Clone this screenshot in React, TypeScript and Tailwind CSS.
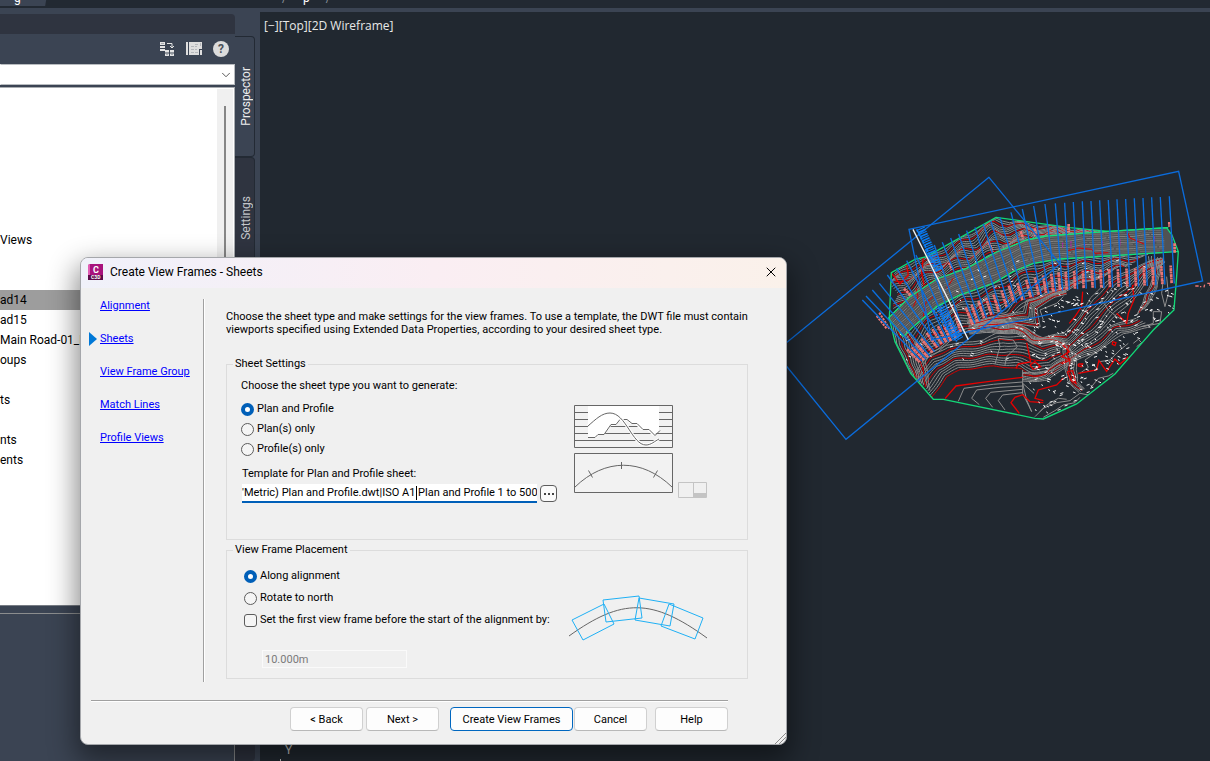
import React from 'react';
import { ChevronDown, X } from 'lucide-react';

type Point = [number, number];

const treeItems = ['Views', '', '', 'ad14', 'ad15', 'Main Road-01_M', 'oups', '', 'ts', '', 'nts', 'ents'];

const steps = ['Alignment', 'Sheets', 'View Frame Group', 'Match Lines', 'Profile Views'];

// Site plan geometry
const boundary: Point[] = [
  [648, 172], [870, 203], [985, 214], [1160, 203], [1176, 225], [1195, 275], [1190, 350], [1182, 450],
  [1120, 510], [1085, 550], [1005, 642], [890, 732], [790, 777], [765, 775], [490, 718], [460, 718],
  [392, 640], [345, 545], [328, 475], [334, 338], [405, 298], [440, 290], [510, 250],
];

const roadTop: Point[] = [
  [325, 475], [390, 410], [470, 357], [560, 325], [650, 276], [740, 240], [800, 228], [985, 214], [1165, 203],
];

const roadBottom: Point[] = [
  [370, 530], [400, 500], [470, 440], [540, 405], [640, 370], [700, 335], [760, 310], [840, 297], [1190, 275],
];

const ticks: [number, number, number, number][] = [
  [247, 420, 425, 603], [258, 408, 438, 597], [277, 390, 450, 588], [298, 370, 464, 575], [322, 345, 478, 560],
  [350, 325, 492, 550], [380, 302, 506, 545], [408, 285, 520, 542], [436, 268, 535, 536], [463, 255, 550, 515],
  [487, 247, 585, 492], [512, 234, 600, 484], [536, 222, 620, 474], [560, 212, 642, 464], [585, 202, 664, 455],
  [610, 192, 688, 442], [632, 182, 710, 428], [660, 172, 735, 420], [693, 157, 760, 412], [727, 147, 784, 405],
  [761, 138, 806, 400], [795, 132, 828, 395], [826, 130, 848, 392], [854, 128, 868, 390], [880, 126, 893, 388],
  [907, 124, 919, 386], [933, 123, 946, 385], [959, 121, 972, 384], [985, 120, 998, 383], [1011, 118, 1024, 382],
  [1037, 117, 1050, 381], [1063, 115, 1076, 380], [1089, 114, 1102, 378], [1115, 112, 1128, 376],
  [1141, 111, 1155, 374], [1168, 109, 1183, 371],
];

const families: { from: Point[]; to: Point[]; count: number; wave: number }[] = [
  {
    from: [[338, 344], [405, 302], [450, 290], [510, 256], [580, 220], [645, 178], [870, 206], [1000, 214]],
    to: [[345, 450], [390, 412], [470, 358], [520, 341], [580, 318], [650, 278], [800, 230], [1000, 215]],
    count: 19,
    wave: 11,
  },
  {
    from: [[380, 535], [405, 505], [470, 446], [540, 410], [640, 375], [760, 316], [900, 296], [1130, 286]],
    to: [[440, 600], [480, 570], [560, 510], [610, 490], [690, 470], [750, 425], [850, 395], [960, 350]],
    count: 15,
    wave: 9,
  },
  {
    from: [[400, 645], [440, 585], [500, 555], [610, 540], [650, 520], [740, 520], [780, 550], [845, 545]],
    to: [[455, 712], [500, 650], [540, 630], [640, 618], [725, 627], [760, 650], [820, 640], [855, 600]],
    count: 13,
    wave: 3,
  },
  {
    from: [[338, 490], [350, 550], [375, 600], [398, 645]],
    to: [[390, 515], [430, 585], [440, 620], [450, 700]],
    count: 10,
    wave: 2,
  },
  {
    from: [[560, 480], [700, 485], [750, 512], [790, 532], [850, 520], [900, 470], [930, 415], [980, 365], [1080, 315], [1150, 290]],
    to: [[570, 520], [700, 518], [760, 550], [830, 550], [880, 575], [940, 530], [1010, 465], [1060, 420], [1110, 350], [1160, 300]],
    count: 12,
    wave: 4,
  },
  {
    from: [[560, 488], [680, 462], [730, 455], [738, 422], [800, 402], [860, 378]],
    to: [[600, 500], [700, 492], [780, 500], [772, 445], [825, 412], [865, 400]],
    count: 9,
    wave: 2,
  },
  {
    from: [[728, 640], [800, 632], [855, 590], [920, 555], [990, 500], [1080, 470]],
    to: [[730, 664], [800, 662], [870, 612], [950, 575], [1030, 520], [1120, 500]],
    count: 7,
    wave: 4,
  },
  {
    from: [[848, 540], [852, 600], [862, 660], [900, 702]],
    to: [[885, 580], [890, 620], [892, 665], [915, 690]],
    count: 6,
    wave: 3,
  },
  {
    from: [[1105, 290], [1122, 350], [1095, 410], [1070, 470]],
    to: [[1150, 290], [1135, 360], [1125, 400], [1090, 455]],
    count: 6,
    wave: 3,
  },
];

const greyLines: Point[][] = [
  [[535, 724], [552, 685], [640, 673], [728, 666]],
  [[598, 734], [575, 715], [590, 690], [660, 682], [728, 678]],
  [[638, 742], [617, 715], [632, 697], [728, 688]],
  [[675, 750], [655, 722], [668, 705], [728, 698]],
  [[728, 630], [728, 700], [755, 755], [740, 720], [728, 670], [762, 700]],
  [[645, 612], [660, 560], [655, 535], [700, 540], [712, 560], [680, 590], [675, 615]],
  [[765, 770], [790, 745], [830, 728], [870, 722], [900, 700], [925, 705]],
  [[790, 772], [825, 752], [850, 735], [885, 728], [900, 712]],
  [[780, 755], [800, 735], [835, 715], [860, 718]],
  [[900, 640], [925, 622], [915, 600], [960, 570], [975, 560]],
  [[960, 605], [990, 600], [1020, 570], [1045, 550]],
  [[1090, 500], [1120, 490], [1120, 455], [1145, 455], [1140, 490], [1085, 500]],
  [[1150, 360], [1145, 400], [1155, 440], [1165, 400], [1160, 350]],
  [[935, 680], [955, 655], [985, 648], [1000, 640]],
  [[965, 420], [985, 450], [1010, 470], [1040, 485]],
  [[790, 480], [780, 450], [830, 430], [850, 410]],
  [[1060, 550], [1075, 538], [1085, 548], [1070, 560]],
];

const redLines: Point[][] = [
  [[495, 716], [528, 678], [600, 668], [728, 652]],
  [[718, 760], [693, 728], [705, 712], [728, 704], [750, 725], [790, 728]],
  [[1058, 375], [1062, 420], [1045, 460], [1040, 490], [1010, 460]],
  [[908, 395], [905, 440], [885, 470], [868, 490]],
  [[850, 655], [830, 675], [775, 690], [765, 715], [790, 722]],
  [[895, 640], [950, 630], [957, 602], [980, 634], [1005, 597], [1020, 612], [1045, 590]],
  [[740, 548], [748, 585], [752, 606], [715, 612], [708, 625]],
  [[750, 615], [765, 605], [782, 620], [760, 628], [750, 615]],
  [[862, 635], [878, 632], [888, 670], [872, 660], [862, 635]],
  [[848, 555], [868, 575], [845, 590], [870, 600], [845, 612]],
  [[998, 545], [1008, 548], [1005, 557], [997, 553], [998, 545]],
  [[895, 612], [908, 612], [905, 620], [895, 618], [895, 612]],
  [[335, 340], [360, 372], [385, 345], [380, 315]],
  [[430, 290], [425, 340], [432, 375]],
  [[1040, 215], [1050, 235], [1090, 250], [1120, 240]],
  [[865, 270], [890, 264], [935, 266], [945, 278], [975, 275]],
];

const toPath = (points: Point[]) => 'M' + points.map(([x, y]) => `${x.toFixed(1)} ${y.toFixed(1)}`).join('L');

// Adds vertices every few units so that a contour can be bent
const densify = (points: Point[], parts = 10): Point[] =>
  points.slice(1).flatMap(([x, y], i) =>
    Array.from({ length: parts }, (_, k): Point => {
      const [px, py] = points[i];
      return [px + ((x - px) * k) / parts, py + ((y - py) * k) / parts];
    }),
  );

const contours = (from: Point[], to: Point[], count: number, wave: number) => {
  const a = densify(from);
  const b = densify(to);
  return Array.from({ length: count }, (_, i) => {
    const t = i / (count - 1);
    return a.map(([x, y], k): Point => {
      const px = x + (b[k][0] - x) * t;
      const py = y + (b[k][1] - y) * t;
      const fade = wave * Math.sin(Math.PI * (0.15 + t * 0.7));
      return [px + fade * Math.cos(py / 11 + k / 5), py + fade * Math.sin(px / 15 + t)];
    });
  });
};

const randomMarks = (count: number, inside: (x: number, y: number) => boolean) => {
  const marks: [number, number, number][] = [];
  let seed = 7;
  const next = () => {
    seed = (seed * 16807) % 2147483647;
    return seed / 2147483647;
  };
  while (marks.length < count) {
    const x = 340 + next() * 850;
    const y = 180 + next() * 590;
    if (inside(x, y)) marks.push([x, y, Math.floor(next() * 3)]);
  }
  return marks;
};

const denseMarks = randomMarks(250, (x, y) => x > 745 && y > 385 && x + y < 1625 && x + y > 1180);
const looseMarks = randomMarks(110, (x, y) => x > 350 && x < 1180 && y > 300 && y < 600 && x + y > 830 && x + y < 1500);

function SitePlan() {
  return (
    <svg width="950" height="749" viewBox="0 0 950 749" fill="none" className="max-w-none [grid-area:1/1]">
      <defs>
        <clipPath id="site">
          <path d={toPath(boundary) + 'Z'} />
        </clipPath>
      </defs>
      <g transform="translate(520 148) scale(0.3333)" strokeWidth="3">
        <g clipPath="url(#site)">
          {families.map((f, i) =>
            contours(f.from, f.to, f.count, f.wave).map((line, k) => (
              <path key={`${i}-${k}`} d={toPath(line)} stroke={k % 5 === 2 ? '#d80000' : '#8e8e8e'} />
            )),
          )}
          {greyLines.map((line, i) => <path key={i} d={toPath(line)} stroke="#8e8e8e" />)}
          {redLines.map((line, i) => <path key={i} d={toPath(line)} stroke="#e60000" strokeWidth="4" />)}
          <path d={toPath([...roadTop, ...[...roadBottom].reverse()]) + 'Z'} fill="#58595a" fillOpacity="0.85" />
          {contours(roadTop, roadBottom, 13, 2).map((line, i) => (
            <path key={i} d={toPath(line)} stroke={i % 3 ? '#6c6c6c' : '#858585'} strokeDasharray={i % 2 ? '60 5' : undefined} />
          ))}
          <path d="M400 440l14-30-6-26M430 470l6-40 24-20M500 385l20-30M865 272l30-8 40 4 10 12 40-2M1040 212l10 22 42 18" stroke="#d80000" />
          {[...denseMarks, ...looseMarks].map(([x, y, kind], i) => (
            <path key={i} d={`M${x.toFixed(0)} ${y.toFixed(0)}${kind === 0 ? 'l9 -3' : kind === 1 ? 'l8 3' : 'l3 5'}`} stroke="#f8f8f8" />
          ))}
        </g>
        <path d={toPath(boundary) + 'Z'} stroke="#12d878" strokeWidth="4" />
        <path d={toPath(roadTop) + toPath([...roadBottom, [1195, 275]])} stroke="#12e07a" strokeWidth="4" />
        <path d="M325 475L370 530" stroke="#12e07a" strokeWidth="4" />

        {/* station labels */}
        {ticks.map(([x1, y1, x2, y2], i) => {
          const length = Math.hypot(x2 - x1, y2 - y1);
          const dx = (x2 - x1) / length;
          const dy = (y2 - y1) / length;
          const x = x2 - 8 * dy;
          const y = y2 + 8 * dx - 2;
          return (
            <path
              key={i}
              d={toPath([[x, y], [x - 54 * dx, y - 54 * dy]])}
              stroke="#e87474"
              strokeWidth="8"
              strokeDasharray={i % 2 ? '9 2 6 1' : '6 1 11 2'}
            />
          );
        })}
        <path d="M298 458L328 506M290 468l30 38" stroke="#ee7777" strokeWidth="6" strokeDasharray="7 3" />
        <path d="M508 308l8 22M722 214l8 22M765 205v24M866 192v24M626 246l12 30M372 386l20 20M864 308v12M1168 186v14M1184 250v28" stroke="#ee7777" strokeWidth="8" strokeDasharray="8 2" />
        <path d="M1246 378h10M1260 380h4M1274 374l-2 8M1282 370h8v8" stroke="#ee7777" strokeWidth="4" />
        <path d="M848 248v14M873 244v20M915 252v6M967 244v14M1020 238v20M1071 236v20M1123 230v20M1176 228v16" stroke="#c416c4" strokeDasharray="6 3" />

        {ticks.map(([x1, y1, x2, y2], i) => <path key={i} d={`M${x1} ${y1}L${x2} ${y2}`} stroke="#0a6fe0" strokeWidth="4" />)}

        {/* view frames and match line */}
        <path d="M387 208L1196 34L1268 363L455 540Z" stroke="#0b6cdc" strokeWidth="4" />
        <path d="M627 52L-15 576L198 838L840 312Z" stroke="#0b6cdc" strokeWidth="4" />
        <path d="M422 205L478 330M478 440L540 540" stroke="#0a7cf5" strokeWidth="26" strokeDasharray="3 3 5 3" />
        <path d="M410 208l62 122M460 450l70 96" stroke="#0a7cf5" strokeWidth="5" strokeDasharray="9 4" />
        <path d="M399 208L565 539" stroke="#f2f2f2" strokeWidth="4" />
      </g>
      <text x="25" y="742" fontSize="12" fontFamily="Roboto, sans-serif" fill="#c8c8c8">Y</text>
      <path d="M20.500 747v3" stroke="#c8c8c8" />
    </svg>
  );
}

function Toolspace() {
  return (
    <>
      <aside className="flex w-[235px] shrink-0 flex-col pt-0.5">
        <div className="h-5 rounded-tr bg-[#2f3440]" />
        <div className="flex h-[30px] items-center justify-end gap-2.5 pr-1.5">
          <button aria-label="Item view" className="flex size-4 items-center justify-center">
            <svg width="16" height="16" viewBox="0 0 16 16" fill="#e4e4e4">
              <path d="M1 1h5v3H1zM1 5h5v2H1zM1 8h5v2H1zM6 9h4v2.500H6zM6 12.500h4V15H6zM11 9h4v2.500h-4zM11 12.500h4V15h-4z" />
              <path d="M8 2.500h5v4M11 5l2 2 2-2" fill="none" stroke="#e4e4e4" />
              <path d="M2 2.500h3M7 13.500h2M12 13.500h2" stroke="#a9adb3" />
            </svg>
          </button>
          <button aria-label="Panorama" className="flex size-[18px] items-center justify-center">
            <svg width="18" height="16" viewBox="0 0 18 16" fill="#dedede">
              <path d="M1 1h2v13H1zM4 1h13v7h-3v6H4zM15 9h2v5h-2z" />
              <path d="M6 5.500h6M6 8.500h6M6 11.500h7M10 3.500h3M15.500 2v4" stroke="#b4b7bb" strokeDasharray="3 1" />
            </svg>
          </button>
          <button aria-label="Help topics" className="flex size-4 items-center justify-center rounded-full bg-[#dcdcdc] text-xs font-bold text-[#4a4f58]">
            ?
          </button>
        </div>
        <div className="grid border border-[#b8bcc0] border-l-white bg-white">
          <select aria-label="Drawing view" className="h-[19px] appearance-none bg-white [grid-area:1/1]" />
          <ChevronDown size={14} strokeWidth={1.5} className="pointer-events-none mr-px self-center justify-self-end text-[#444] [grid-area:1/1]" />
        </div>
        <div className="mt-0.5 flex flex-1 border-t border-r border-[#a8acb0] bg-white pt-px">
          <ul className="flex-1 overflow-hidden pt-[141px] text-xs text-black">
            {treeItems.map((item, index) => (
              <li key={index} className={`h-5 whitespace-nowrap leading-5 ${item === 'ad14' ? 'bg-[#9d9d9d]' : ''}`}>
                {item}
              </li>
            ))}
          </ul>
          <div className="flex w-4 justify-center bg-[#f0f0f0] pt-[17px]">
            <div className="w-0.5 bg-[#868686]" />
          </div>
          <div className="w-px" />
        </div>
        <div className="h-[156px] border-t border-[#777c84] pt-[7px]">
          <div className="h-full border-t border-r border-[#8b8d8e]" />
        </div>
      </aside>
      <div className="flex w-[25px] shrink-0 flex-col pt-6 pr-[5px]">
        <button className="flex h-[121px] items-center justify-center rounded-r border border-l-0 border-[#232a34] pl-0.5 text-xs text-[#eeeeee]">
          <span className="rotate-180 [writing-mode:vertical-rl]">Prospector</span>
        </button>
        <button className="flex h-[121px] items-center justify-center rounded-r border border-l-0 border-[#232a34] bg-[#2f3440] pl-0.5 text-xs text-[#c3c6ca]">
          <span className="rotate-180 [writing-mode:vertical-rl]">Settings</span>
        </button>
        <div className="flex-1 rounded-r bg-[#2f3440]" />
      </div>
    </>
  );
}

function SheetPreview() {
  return (
    <svg width="134" height="96" viewBox="0 0 134 96" fill="none" stroke="#666666" className="shrink-0">
      <path d="M0.500 0.500h98v42h-98z" fill="#f2f2f2" />
      <path d="M0 7.500h99M0 14.500h99M0 21.500h99M0 28.500h99M0 35.500h99" />
      <path d="M14 1h71v25l-6 5-6-6h-6l-6-6h-4l-6-4h-4l-6 6h-4l-7 9h-5l-3 3h-8z" fill="#ffffff" stroke="none" />
      <path d="M14 32.500h7l3-3h6l7-10h5l4-5h7l5 4h5l6 6h6l6 6 5-5" />
      <path d="M14 21C22 14 28 8 36 8c16 0 22 32 36 32 5 0 9-4 13-6" stroke="#ffffff" strokeWidth="3" />
      <path d="M14 21C22 14 28 8 36 8c16 0 22 32 36 32 5 0 9-4 13-6" />
      <path d="M0.500 48.500h98v39h-98z" fill="#f2f2f2" />
      <path d="M1 82C31 53 68 53 98 82M47.500 57v7M14.500 65.500l4 7M83.500 65.500l-4 7" />
      <path d="M104.500 77.500h28v15h-28zM119.500 77v15" stroke="#c4c4c4" />
      <path d="M120 88h12v4h-12z" fill="#c4c4c4" stroke="none" />
    </svg>
  );
}

function PlacementPreview() {
  return (
    <svg width="140" height="48" viewBox="0 0 140 48" fill="none" className="shrink-0">
      <path d="M1 42C54 4 84 4 139 44" stroke="#666666" />
      <path d="M4 26L36 10 46 30 15 46zM35 6L71 2 74 24 38 28zM71 4L106 10 102 32 67 26zM101 10L135 24 127 45 93 32z" stroke="#1fb0f5" />
    </svg>
  );
}

function Choice({ label, ...props }: { label: string } & React.InputHTMLAttributes<HTMLInputElement>) {
  const shape =
    props.type === 'checkbox'
      ? 'rounded-[3px] border border-[#5c5c5c] bg-[#f5f5f5]'
      : 'rounded-full border border-[#5c5c5c] bg-[#f5f5f5] checked:border-4 checked:border-[#005fb8] checked:bg-white';
  return (
    <label className="flex h-full items-center gap-[3px]">
      <input {...props} className={`size-[13px] shrink-0 appearance-none ${shape}`} />
      {label}
    </label>
  );
}

function DialogButton({ children, primary }: { children: React.ReactNode; primary?: boolean }) {
  return (
    <button
      className={`h-6 rounded border bg-[#fdfdfd] text-[11px] ${
        primary ? 'w-[123px] border-[#0067c0]' : 'w-[73px] border-[#d0d0d0] border-b-[#b8b8b8]'
      }`}
    >
      {children}
    </button>
  );
}

function CreateViewFramesDialog() {
  return (
    <div
      role="dialog"
      aria-labelledby="dialog-title"
      className="absolute top-[257px] left-20 w-[707px] overflow-hidden rounded-lg border border-[#a5a7ab] bg-[#f0f0f0] pb-[13px] text-[11px] leading-[13px] text-black shadow-[0_12px_28px_4px_rgba(0,0,0,0.45)]"
    >
      <header className="flex h-[30px] items-center bg-linear-to-r from-[#f0f1fa] via-[#faeef3] to-[#faf1ea] px-[7px] pb-0.5">
        <svg width="15" height="16" viewBox="0 0 15 16">
          <path d="M0 1l2-1h13v11H0z" fill="#a8127c" />
          <path d="M0 1l2-1v11H0z" fill="#e05cb4" />
          <path d="M0 11h15v5H0z" fill="#5e0a4a" />
          <text x="5" y="9" fontSize="9" fontWeight="700" fontFamily="Roboto, sans-serif" fill="#ffffff">C</text>
          <text x="3" y="15" fontSize="5" fontWeight="700" fontFamily="Roboto, sans-serif" fill="#ffffff">C3D</text>
        </svg>
        <h1 id="dialog-title" className="ml-[7px] flex-1 text-xs">Create View Frames - Sheets</h1>
        <button aria-label="Close">
          <X size={16} strokeWidth={1.5} />
        </button>
      </header>

      <div className="flex pt-[11px]">
        <nav className="w-[122px] shrink-0 pl-2">
          <ul className="flex flex-col gap-[19px] leading-[14px]">
            {steps.map((step) => (
              <li key={step} className="flex items-center">
                <span className="w-[11px]">
                  {step === 'Sheets' && (
                    <svg width="8" height="14" viewBox="0 0 8 14">
                      <path d="M0 0l8 7-8 7z" fill="#0078d7" />
                    </svg>
                  )}
                </span>
                <a href="#" className="text-[#0000ff] underline">{step}</a>
              </li>
            ))}
          </ul>
        </nav>

        <div className="flex-1 border-l border-[#a0a0a0] pt-[11px] pr-10 pb-[3px] pl-[22px] shadow-[inset_1px_0_0_#ffffff]">
          <p className="whitespace-nowrap">
            Choose the sheet type and make settings for the view frames. To use a template, the DWT file must contain
            <br />
            viewports specified using Extended Data Properties, according to your desired sheet type.
          </p>

          <fieldset className="mt-[22px] flex justify-between border border-[#dcdcdc] pr-[39px] pb-9 pl-3.5 leading-3">
            <legend className="-ml-2 px-0.5">Sheet Settings</legend>
            <div className="pt-2.5">
              <p>Choose the sheet type you want to generate:</p>
              <div className="mt-[7px] grid auto-rows-[20px]">
                <Choice type="radio" name="sheet-type" label="Plan and Profile" defaultChecked />
                <Choice type="radio" name="sheet-type" label="Plan(s) only" />
                <Choice type="radio" name="sheet-type" label="Profile(s) only" />
              </div>
              <label htmlFor="template" className="mt-[9px] block pl-px">Template for Plan and Profile sheet:</label>
              <div className="mt-1 flex items-center gap-[3px] pl-px">
                <div className="relative">
                  <input
                    id="template"
                    defaultValue="'Metric) Plan and Profile.dwt|ISO A1 Plan and Profile 1 to 500"
                    className="block h-[19px] w-[295px] border-b-2 border-[#005fb8] bg-white text-right"
                  />
                  {/* text caret */}
                  <span className="absolute top-0.5 left-[174px] h-3.5 w-px bg-black" />
                </div>
                <button aria-label="Browse" className="flex size-[17px] items-center justify-center gap-0.5 rounded-sm border border-[#5c5c5c] bg-[#fafafa]">
                  <span className="size-0.5 bg-[#444]" />
                  <span className="size-0.5 bg-[#444]" />
                  <span className="size-0.5 bg-[#444]" />
                </button>
              </div>
            </div>
            <div className="pt-[35px]">
              <SheetPreview />
            </div>
          </fieldset>

          <fieldset className="mt-1 flex justify-between border border-[#dcdcdc] pr-[39px] pb-2.5 pl-[17px] leading-3">
            <legend className="-ml-[11px] px-0.5">View Frame Placement</legend>
            <div className="pt-[9px]">
              <div className="grid auto-rows-[22px]">
                <Choice type="radio" name="placement" label="Along alignment" defaultChecked />
                <Choice type="radio" name="placement" label="Rotate to north" />
                <Choice type="checkbox" label="Set the first view frame before the start of the alignment by:" />
              </div>
              <input
                aria-label="Distance before start"
                disabled
                defaultValue="10.000m"
                className="mt-[19px] ml-[18px] block h-[18px] w-[145px] border border-[#fafafa] bg-[#f0f0f0] px-0.5 text-[#7a7a7a]"
              />
            </div>
            <div className="pt-[38px]">
              <PlacementPreview />
            </div>
          </fieldset>
        </div>
      </div>

      <footer className="mt-[18px] mr-[58px] ml-2.5 flex justify-end border-t border-[#a0a0a0] pt-1.5 shadow-[inset_0_1px_0_#ffffff]">
        <div className="flex gap-[3px]">
          <DialogButton>&lt; Back</DialogButton>
          <DialogButton>Next &gt;</DialogButton>
        </div>
        <div className="mr-2 ml-[11px] flex gap-px">
          <DialogButton primary>Create View Frames</DialogButton>
          <DialogButton>Cancel</DialogButton>
        </div>
        <DialogButton>Help</DialogButton>
      </footer>
      <svg width="12" height="12" viewBox="0 0 12 12" stroke="#8a8a8a" className="absolute right-0 bottom-0">
        <path d="M1 12L12 1M5 12l7-7M9 12l3-3" />
      </svg>
    </div>
  );
}

export default function App() {
  return (
    <div className="relative flex min-h-screen flex-col overflow-hidden bg-[#3b4453] font-[Roboto,sans-serif]">
      <div className="flex h-2 items-end overflow-hidden bg-[#222932] pb-0.5 text-xs leading-4 text-white">
        <div className="w-12 bg-[#3b4453] pl-3.5 [clip-path:polygon(0_0,100%_0,94%_100%,0_100%)]">g</div>
        <div className="flex gap-4 pl-[234px] text-[#8a919c]">
          <span>/</span>
          <span className="text-white">p</span>
          <span>/</span>
        </div>
      </div>
      <div className="h-1" />
      <div className="flex flex-1">
        <Toolspace />
        <main className="grid flex-1 overflow-hidden bg-[#212830]">
          <SitePlan />
          <p className="pt-1.5 pl-1 font-['Open_Sans',sans-serif] text-xs leading-4 text-[#e8e8e8] [grid-area:1/1]">[−][Top][2D Wireframe]</p>
        </main>
      </div>
      <CreateViewFramesDialog />
    </div>
  );
}
